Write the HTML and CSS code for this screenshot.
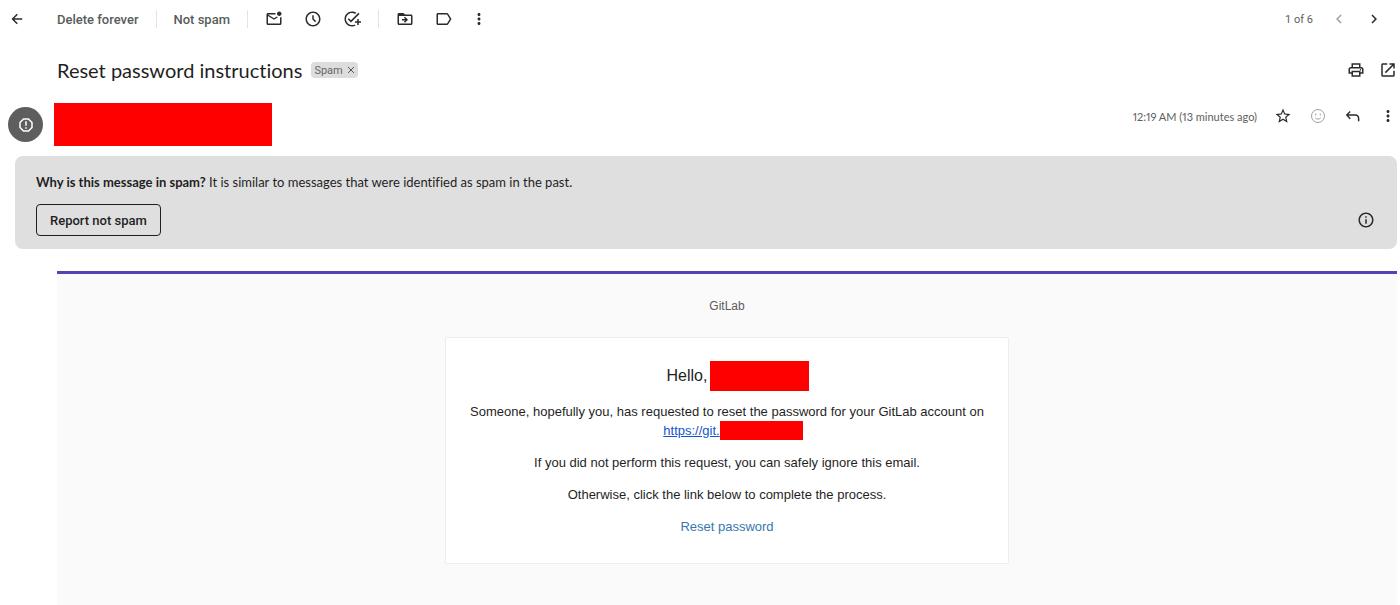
FILE: index.html
```html
<!DOCTYPE html>
<html lang="en">
<head>
	<meta charset="UTF-8">
	<meta name="viewport" content="width=device-width, initial-scale=1">
	<title>Reset password instructions</title>
	<link rel="stylesheet" href="styles.css">
</head>
<body>
<header class="toolbar">
	<button class="icon-btn back" aria-label="Back to Spam">
		<svg class="icon" viewBox="0 0 24 24"><path d="M19 11H8.400l4.700-4.700L11.700 5l-7 7 7 7 1.400-1.400L8.400 13H19v-2z"/></svg>
	</button>
	<button class="text-btn">Delete forever</button>
	<span class="divider"></span>
	<button class="text-btn">Not spam</button>
	<span class="divider"></span>
	<div class="icon-group">
		<button class="icon-btn" aria-label="Mark as unread">
			<svg class="icon" viewBox="0 0 24 24"><path d="M22 8.98V18c0 1.1-.9 2-2 2H4c-1.1 0-2-.9-2-2V6c0-1.1.9-2 2-2h10.1c-.06.32-.1.66-.1 1s.04.68.1 1H4l8 5 3.67-2.29c.47.43 1.02.76 1.63.98L12 13 4 8v10h16V9.9c.74-.15 1.42-.48 2-.92zM16 5c0 1.66 1.34 3 3 3s3-1.34 3-3-1.34-3-3-3-3 1.34-3 3z"/></svg>
		</button>
		<button class="icon-btn" aria-label="Snooze">
			<svg class="icon" viewBox="0 0 24 24"><path d="M11.99 2C6.47 2 2 6.48 2 12s4.47 10 9.99 10C17.52 22 22 17.52 22 12S17.52 2 11.99 2zM12 20c-4.42 0-8-3.58-8-8s3.58-8 8-8 8 3.58 8 8-3.580 8-8 8zm-1-13h2v4.6l3.2 3.2-1.4 1.4L11 12.4z"/></svg>
		</button>
		<button class="icon-btn" aria-label="Add to Tasks">
			<svg class="icon" viewBox="0 0 24 24"><path d="M22 5.18 10.59 16.6l-4.24-4.24 1.41-1.41 2.83 2.83 10-10L22 5.18zM12 20c-4.41 0-8-3.59-8-8s3.59-8 8-8c1.57 0 3.04.46 4.28 1.25l1.45-1.45C16.1 2.67 14.13 2 12 2 6.48 2 2 6.48 2 12s4.48 10 10 10c1.73 0 3.36-.44 4.78-1.22l-1.5-1.5c-1 .46-2.11.72-3.28.72zm7-5h-3v2h3v3h2v-3h3v-2h-3v-3h-2v3z"/></svg>
		</button>
	</div>
	<span class="divider"></span>
	<div class="icon-group">
		<button class="icon-btn" aria-label="Move to">
			<svg class="icon" viewBox="0 0 24 24"><path d="M20 6h-8l-2-2H4c-1.1 0-2 .9-2 2v12c0 1.1.9 2 2 2h16c1.1 0 2-.9 2-2V8c0-1.1-.9-2-2-2zm0 12H4V8h16v10zm-8-1 4-4-4-4-1.41 1.41L12.17 12H8v2h4.17l-1.58 1.59L12 17z"/></svg>
		</button>
		<button class="icon-btn" aria-label="Labels">
			<svg class="icon" viewBox="0 0 24 24"><path d="M16 4H4c-1.100 0-2 .9-2 2v12c0 1.100.9 2 2 2h12c.67 0 1.270-.33 1.630-.84L22 12l-4.370-7.160C17.270 4.330 16.670 4 16 4zm0 14H4V6h12l3.700 6L16 18z"/></svg>
		</button>
		<button class="icon-btn more" aria-label="More">
			<svg class="icon" viewBox="0 0 24 24"><path d="M12 8c1.1 0 2-.9 2-2s-.9-2-2-2-2 .9-2 2 .9 2 2 2zm0 2c-1.1 0-2 .9-2 2s.9 2 2 2 2-.9 2-2-.9-2-2-2zm0 6c-1.1 0-2 .9-2 2s.9 2 2 2 2-.9 2-2-.9-2-2-2z"/></svg>
		</button>
	</div>
	<div class="pager">
		<span>1 of 6</span>
		<button class="icon-btn" aria-label="Newer" disabled>
			<svg class="icon" viewBox="0 0 24 24"><path d="M15.41 7.41 14 6l-6 6 6 6 1.41-1.41L10.83 12z"/></svg>
		</button>
		<button class="icon-btn" aria-label="Older">
			<svg class="icon" viewBox="0 0 24 24"><path d="M10 6 8.59 7.41 13.17 12l-4.58 4.59L10 18l6-6z"/></svg>
		</button>
	</div>
</header>

<main class="message">
	<div class="subject">
		<h1>Reset password instructions</h1>
		<span class="label">Spam <button class="label-remove" aria-label="Remove label Spam"><svg viewBox="0 0 8 8"><path d="M1 1l6 6M7 1L1 7"/></svg></button></span>
		<div class="subject-actions">
			<button class="icon-btn" aria-label="Print all">
				<svg class="icon" viewBox="0 0 24 24"><path d="M19 8h-1V3H6v5H5c-1.66 0-3 1.34-3 3v6h4v4h12v-4h4v-6c0-1.66-1.34-3-3-3zM8 5h8v3H8V5zm8 14H8v-4h8v4zm2-4v-2H6v2H4v-4c0-.55.45-1 1-1h14c.55 0 1 .45 1 1v4h-2zm-1-3.500a1 1 0 1 0 2 0 1 1 0 1 0-2 0z"/></svg>
			</button>
			<button class="icon-btn" aria-label="In new window">
				<svg class="icon" viewBox="0 0 24 24"><path d="M19 19H5V5h6V3H5c-1.100 0-2 .9-2 2v14c0 1.100.9 2 2 2h14c1.100 0 2-.9 2-2v-6h-2v6zM14 3v2h3.590l-9.830 9.830 1.410 1.410L19 6.410V10h2V3h-7z"/></svg>
			</button>
		</div>
	</div>

	<div class="sender">
		<div class="avatar">
			<svg class="icon" viewBox="0 0 24 24"><path d="M15.730 3H8.270L3 8.270v7.460L8.270 21h7.460L21 15.730V8.270L15.730 3zM19 14.900L14.900 19H9.100L5 14.900V9.100L9.100 5h5.800L19 9.100v5.800zM11 7h2v6h-2zM11 15h2v2h-2z"/></svg>
		</div>
		<div class="redacted sender-name"></div>
		<div class="sender-meta">
			<span class="date">12:19 AM (13 minutes ago)</span>
			<button class="icon-btn" aria-label="Star">
				<svg class="icon" viewBox="0 0 24 24"><path d="M22 9.240l-7.190-.62L12 2 9.190 8.630 2 9.240l5.460 4.730L5.820 21 12 17.270 18.180 21l-1.630-7.030L22 9.240zM12 15.400l-3.760 2.270 1-4.280-3.320-2.880 4.380-.38L12 6.100l1.710 4.040 4.380.38-3.320 2.880 1 4.280L12 15.400z"/></svg>
			</button>
			<button class="icon-btn react" aria-label="Add reaction" disabled>
				<svg class="icon" viewBox="0 0 18 18"><circle cx="9" cy="9" r="6.500"/><path d="M6.700 6.500v2M11.300 6.500v2M6.300 11c1.200 1.400 4.200 1.400 5.400 0"/></svg>
			</button>
			<button class="icon-btn" aria-label="Reply">
				<svg class="icon" viewBox="0 0 24 24"><path d="M9 15l-3.200-3.200H15c2.200 0 3.500 1.300 3.500 3.500V19h2v-3.700c0-3.300-2.200-5.500-5.500-5.500H5.800L9 6.600 7.600 5.200 2.400 10.800l5.200 5.600z"/></svg>
			</button>
			<button class="icon-btn" aria-label="More message options">
				<svg class="icon" viewBox="0 0 24 24"><path d="M12 8c1.1 0 2-.9 2-2s-.9-2-2-2-2 .9-2 2 .9 2 2 2zm0 2c-1.1 0-2 .9-2 2s.9 2 2 2 2-.9 2-2-.9-2-2-2zm0 6c-1.1 0-2 .9-2 2s.9 2 2 2 2-.9 2-2-.9-2-2-2z"/></svg>
			</button>
		</div>
	</div>

	<section class="spam-banner">
		<p><strong>Why is this message in spam?</strong> It is similar to messages that were identified as spam in the past.</p>
		<div class="banner-row">
			<button class="report-btn">Report not spam</button>
			<button class="icon-btn" aria-label="Learn more">
				<svg class="icon" viewBox="0 0 24 24"><path d="M11 7h2v2h-2zM11 11h2v6h-2zM12 2C6.480 2 2 6.480 2 12s4.480 10 10 10 10-4.480 10-10S17.520 2 12 2zm0 18c-4.410 0-8-3.590-8-8s3.590-8 8-8 8 3.590 8 8-3.590 8-8 8z"/></svg>
			</button>
		</div>
	</section>

	<article class="email">
		<div class="email-brand">GitLab</div>
		<div class="card">
			<h2>Hello, <span class="redacted user-name"></span></h2>
			<p>Someone, hopefully you, has requested to reset the password for your GitLab account on <span class="host"><a href="#">https://git.</a><span class="redacted host-name"></span></span></p>
			<p>If you did not perform this request, you can safely ignore this email.</p>
			<p>Otherwise, click the link below to complete the process.</p>
			<p><a class="reset-link" href="#">Reset password</a></p>
		</div>
	</article>
</main>
</body>
</html>
```
FILE: styles.css
```css
*{
	box-sizing: border-box;
	margin: 0;
	padding: 0;
}
body{
	display: flex;
	flex-direction: column;
	min-height: 100vh;
	background: #fff;
	color: #1f1f1f;
	font-family: Roboto, "Liberation Sans", sans-serif;
	font-size: 13px;
}
button{
	border: none;
	background: none;
	color: inherit;
	font: inherit;
	cursor: pointer;
}
.icon{
	display: block;
	width: 18px;
	height: 18px;
	fill: currentColor;
}
.icon-btn{
	flex: none;
	color: #2b2b2b;
}
.icon-btn:disabled{
	color: #a0a0a0;
	cursor: default;
}
.redacted{
	background: #f00;
}

/* toolbar */
.toolbar{
	display: flex;
	align-items: center;
	height: 38px;
	padding: 0 17px 0 8px;
}
.back{
	margin-right: 31px;
}
.text-btn{
	color: #5a5c5b;
	font-weight: 500;
}
.divider{
	width: 1px;
	height: 18px;
	margin: 0 17px;
	background: #e3e3e3;
}
.icon-group{
	display: flex;
	gap: 21px;
}
.toolbar .more{
	margin-left: -4px;
}
.pager{
	display: flex;
	align-items: center;
	gap: 17px;
	margin-left: auto;
	color: #5e5e5e;
	font-size: 11px;
}

/* subject */
.message{
	display: flex;
	flex: 1;
	flex-direction: column;
	padding-right: 3px;
}
.subject{
	display: flex;
	align-items: center;
	height: 64px;
	padding-left: 57px;
}
.subject h1{
	font-family: Lato, sans-serif;
	font-size: 20px;
	font-weight: 400;
	font-variant-ligatures: none;
}
.label{
	display: flex;
	align-items: center;
	gap: 4px;
	height: 16px;
	margin-left: 9px;
	padding: 0 3px;
	border-radius: 4px;
	background: #ddd;
	color: #666;
	font-size: 11px;
}
.label-remove svg{
	display: block;
	width: 8px;
	height: 8px;
	fill: none;
	stroke: #555;
}
.subject-actions{
	display: flex;
	gap: 14px;
	margin-left: auto;
}

/* sender */
.sender{
	display: flex;
	align-items: center;
	height: 45px;
	padding-left: 8px;
}
.avatar{
	display: grid;
	place-items: center;
	width: 35px;
	height: 35px;
	border-radius: 50%;
	background: #5e5e5e;
	color: #fff;
}
.sender-name{
	width: 218px;
	height: 43px;
	margin-left: 11px;
}
.sender-meta{
	display: flex;
	align-items: center;
	align-self: flex-start;
	gap: 17px;
	margin: 5px 0 0 auto;
}
.date{
	color: #5e5e5e;
	font-family: Lato, sans-serif;
	font-size: 11px;
	font-variant-numeric: proportional-nums;
}
.react .icon{
	fill: none;
	stroke: currentColor;
}

/* spam banner */
.spam-banner{
	margin: 9px 0 22px 15px;
	padding: 17px 22px 13px 21px;
	border-radius: 8px;
	background: #dfdfdf;
}
.spam-banner p{
	font-family: Lato, sans-serif;
	font-variant-ligatures: none;
	line-height: 18px;
}
.spam-banner strong{
	font-weight: 700;
}
.banner-row{
	display: flex;
	align-items: center;
	justify-content: space-between;
	margin-top: 13px;
}
.report-btn{
	height: 32px;
	padding: 0 13px;
	border: 1px solid #1f1f1f;
	border-radius: 4px;
	font-weight: 500;
}

/* email body */
.email{
	flex: 1;
	margin-left: 57px;
	padding-bottom: 40px;
	border-top: 3px solid #5940b5;
	background: #fafafa;
	font-family: "Liberation Sans", Arial, sans-serif;
	text-align: center;
}
.email-brand{
	padding: 23px 0 21px;
	color: #5c5c5c;
	font-size: 12px;
	line-height: 19px;
}
.card{
	width: 564px;
	max-width: 100%;
	margin: 0 auto;
	padding: 23px 22px 14px;
	border: 1px solid #ededed;
	border-radius: 2px;
	background: #fff;
}
.card h2{
	display: flex;
	align-items: center;
	justify-content: center;
	gap: 3px;
	margin-bottom: 11px;
	font-size: 16px;
	font-weight: 400;
	line-height: 30px;
}
.user-name{
	width: 99px;
	height: 30px;
	margin-right: -22px;
}
.card p{
	margin-bottom: 13px;
	font-size: 13px;
	line-height: 19px;
}
.card a{
	color: #1155cc;
}
.host{
	display: flex;
	justify-content: center;
}
.host-name{
	width: 83px;
	height: 19px;
	margin-right: -12px;
}
.card .reset-link{
	color: #3777b0;
	text-decoration: none;
}
```
